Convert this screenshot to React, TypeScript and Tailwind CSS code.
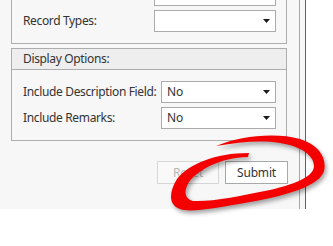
import React from "react";

function Select({ value, width }: { value?: string; width: string }) {
  return (
    <div
      className={`${width} h-[22px] bg-white border border-[#ababab] flex items-center justify-between pl-[5px] pr-[5px]`}
    >
      <span className="text-[12px] tracking-[-0.2px] text-[#333333] leading-none">{value ?? ""}</span>
      <svg width="7" height="4" viewBox="0 0 7 4" className="shrink-0">
        <polygon points="0,0 7,0 3.5,4" fill="#1a1a1a" />
      </svg>
    </div>
  );
}

function Row({ label, labelW, selW, value }: { label: string; labelW: string; selW: string; value?: string }) {
  return (
    <div className="flex items-center">
      <div className={`${labelW} text-[12px] tracking-[-0.35px] text-[#333333] leading-none whitespace-nowrap`}>{label}</div>
      <Select value={value} width={selW} />
    </div>
  );
}

export default function App() {
  return (
    <div
      className="relative w-[333px] h-[246px] bg-white overflow-hidden"
      style={{ fontFamily: '"Noto Sans", "Open Sans", sans-serif' }}
    >
      <div className="flex h-[209px]">
        <div className="w-[299px] bg-[#f7f7f7] flex flex-col pl-[11px]">
          {/* group 1 (cut off at top) */}
          <div className="w-[276px] border-l border-r border-b border-[#adadad] flex flex-col gap-[4px] pl-[11px] pr-[10px] pb-[11px] mt-[-16px]">
            <div className="flex justify-end">
              <Select width="w-[122px]" />
            </div>
            <Row label="Record Types:" labelW="w-[131px]" selW="w-[122px]" />
          </div>
          {/* group 2 */}
          <div className="w-[276px] mt-[4px] border border-[#adadad] flex flex-col">
            <div className="h-[21px] bg-[#eeeeee] border-b border-[#adadad] flex items-center pl-[11px] text-[12px] tracking-[-0.35px] text-[#333333] leading-none">
              Display Options:
            </div>
            <div className="flex flex-col gap-[4px] pl-[11px] pr-[10px] pt-[11px] pb-[11px]">
              <Row label="Include Description Field:" labelW="w-[138px]" selW="w-[115px]" value="No" />
              <Row label="Include Remarks:" labelW="w-[138px]" selW="w-[115px]" value="No" />
            </div>
          </div>
          {/* buttons */}
          <div className="w-[277px] flex justify-end gap-[6px] mt-[20px]">
            <button className="w-[62px] h-[23px] border border-[#d6d6d6] bg-[#f9f9f9] text-[12px] tracking-[-0.2px] text-[#b8b8b8] leading-none">
              Reset
            </button>
            <button className="w-[63px] h-[23px] border border-[#a8a8a8] bg-white text-[12px] tracking-[-0.2px] text-[#333333] leading-none">
              Submit
            </button>
          </div>
        </div>
        <div className="w-px bg-[#a8a8a8]" />
        <div className="w-[5px] bg-[#f7f7f7]" />
        <div className="w-px bg-[#2b6cb5]" />
      </div>

      {/* red hand-drawn loop */}
      <svg
        className="absolute left-0 top-0 drop-shadow-[2px_3px_2px_rgba(0,0,0,0.35)]"
        width="333"
        height="246"
        viewBox="0 0 333 246"
      >
        <path
          fill="#f40000"
          d="M 216 146
             C 240 136, 275 132, 300 139
             C 319 145, 327 158, 324 171
             C 320 185, 290 195, 250 202
             C 215 208, 190 213, 180 209
             C 168 205, 169 192, 177 179
             C 189 164, 215 153, 249 153
             L 248 157
             C 220 158, 199 169, 189 182
             C 183 192, 185 199, 193 201
             C 212 202, 240 196, 270 190
             C 300 183, 314 175, 314 166
             C 314 155, 300 146, 280 143
             C 260 140, 240 142, 216 146 Z"
        />
      </svg>
    </div>
  );
}
